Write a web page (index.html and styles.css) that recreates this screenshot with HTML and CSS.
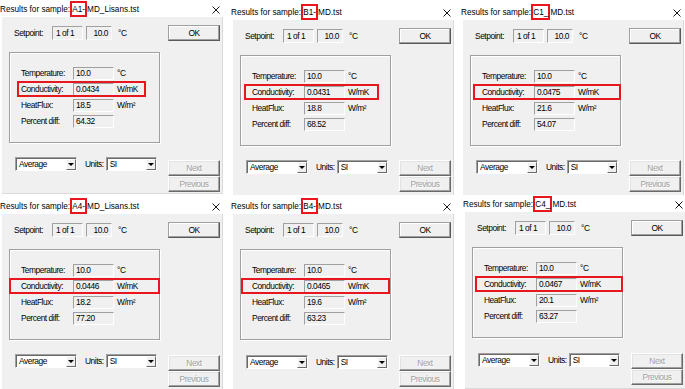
FILE: index.html
```html
<!DOCTYPE html>
<html lang="en">

<head>
    <meta charset="UTF-8">
    <meta name="viewport" content="width=device-width, initial-scale=1.0">
    <title>Results</title>
    <link rel="stylesheet" href="styles.css">
</head>

<body>
    <div class="sheet">

        <div class="dialog d1">
            <div class="titlebar">
                <span class="title">Results for sample: <span class="mark">A1-</span>MD_Lisans.tst</span>
                <svg class="close" viewBox="0 0 8 8"><path d="M0.5 0.5L7.5 7.5M7.5 0.5L0.5 7.5" /></svg>
            </div>
            <div class="window">
                <div class="setpoint-row">
                    <span class="sp-label">Setpoint:</span>
                    <span class="field field-count">1 of 1</span>
                    <span class="field field-sp">10.0</span>
                    <span class="sp-unit">°C</span>
                    <span class="btn btn-ok">OK</span>
                </div>
                <div class="group">
                    <div class="row"><span class="row-label">Temperature:</span><span class="field">10.0</span><span class="row-unit">°C</span></div>
                    <div class="row hl"><span class="row-label">Conductivity:</span><span class="field">0.0434</span><span class="row-unit">W/mK</span></div>
                    <div class="row"><span class="row-label">HeatFlux:</span><span class="field">18.5</span><span class="row-unit">W/m²</span></div>
                    <div class="row"><span class="row-label">Percent diff:</span><span class="field">64.32</span></div>
                </div>
                <div class="controls">
                    <span class="combo combo-mode"><span class="combo-text">Average</span><span class="combo-arrow"></span></span>
                    <span class="units-label">Units:</span>
                    <span class="combo combo-units"><span class="combo-text">SI</span><span class="combo-arrow"></span></span>
                    <div class="nav">
                        <span class="btn btn-off">Next</span>
                        <span class="btn btn-off">Previous</span>
                    </div>
                </div>
            </div>
        </div>

        <div class="dialog d2">
            <div class="titlebar">
                <span class="title">Results for sample: <span class="mark">B1-</span>MD.tst</span>
                <svg class="close" viewBox="0 0 8 8"><path d="M0.5 0.5L7.5 7.5M7.5 0.5L0.5 7.5" /></svg>
            </div>
            <div class="window">
                <div class="setpoint-row">
                    <span class="sp-label">Setpoint:</span>
                    <span class="field field-count">1 of 1</span>
                    <span class="field field-sp">10.0</span>
                    <span class="sp-unit">°C</span>
                    <span class="btn btn-ok">OK</span>
                </div>
                <div class="group">
                    <div class="row"><span class="row-label">Temperature:</span><span class="field">10.0</span><span class="row-unit">°C</span></div>
                    <div class="row hl"><span class="row-label">Conductivity:</span><span class="field">0.0431</span><span class="row-unit">W/mK</span></div>
                    <div class="row"><span class="row-label">HeatFlux:</span><span class="field">18.8</span><span class="row-unit">W/m²</span></div>
                    <div class="row"><span class="row-label">Percent diff:</span><span class="field">68.52</span></div>
                </div>
                <div class="controls">
                    <span class="combo combo-mode"><span class="combo-text">Average</span><span class="combo-arrow"></span></span>
                    <span class="units-label">Units:</span>
                    <span class="combo combo-units"><span class="combo-text">SI</span><span class="combo-arrow"></span></span>
                    <div class="nav">
                        <span class="btn btn-off">Next</span>
                        <span class="btn btn-off">Previous</span>
                    </div>
                </div>
            </div>
        </div>

        <div class="dialog d3">
            <div class="titlebar">
                <span class="title">Results for sample: <span class="mark">C1_</span>MD.tst</span>
                <svg class="close" viewBox="0 0 8 8"><path d="M0.5 0.5L7.5 7.5M7.5 0.5L0.5 7.5" /></svg>
            </div>
            <div class="window">
                <div class="setpoint-row">
                    <span class="sp-label">Setpoint:</span>
                    <span class="field field-count">1 of 1</span>
                    <span class="field field-sp">10.0</span>
                    <span class="sp-unit">°C</span>
                    <span class="btn btn-ok">OK</span>
                </div>
                <div class="group">
                    <div class="row"><span class="row-label">Temperature:</span><span class="field">10.0</span><span class="row-unit">°C</span></div>
                    <div class="row hl"><span class="row-label">Conductivity:</span><span class="field">0.0475</span><span class="row-unit">W/mK</span></div>
                    <div class="row"><span class="row-label">HeatFlux:</span><span class="field">21.6</span><span class="row-unit">W/m²</span></div>
                    <div class="row"><span class="row-label">Percent diff:</span><span class="field">54.07</span></div>
                </div>
                <div class="controls">
                    <span class="combo combo-mode"><span class="combo-text">Average</span><span class="combo-arrow"></span></span>
                    <span class="units-label">Units:</span>
                    <span class="combo combo-units"><span class="combo-text">SI</span><span class="combo-arrow"></span></span>
                    <div class="nav">
                        <span class="btn btn-off">Next</span>
                        <span class="btn btn-off">Previous</span>
                    </div>
                </div>
            </div>
        </div>

        <div class="dialog d4">
            <div class="titlebar">
                <span class="title">Results for sample: <span class="mark">A4-</span>MD_Lisans.tst</span>
                <svg class="close" viewBox="0 0 8 8"><path d="M0.5 0.5L7.5 7.5M7.5 0.5L0.5 7.5" /></svg>
            </div>
            <div class="window">
                <div class="setpoint-row">
                    <span class="sp-label">Setpoint:</span>
                    <span class="field field-count">1 of 1</span>
                    <span class="field field-sp">10.0</span>
                    <span class="sp-unit">°C</span>
                    <span class="btn btn-ok">OK</span>
                </div>
                <div class="group">
                    <div class="row"><span class="row-label">Temperature:</span><span class="field">10.0</span><span class="row-unit">°C</span></div>
                    <div class="row hl"><span class="row-label">Conductivity:</span><span class="field">0.0446</span><span class="row-unit">W/mK</span></div>
                    <div class="row"><span class="row-label">HeatFlux:</span><span class="field">18.2</span><span class="row-unit">W/m²</span></div>
                    <div class="row"><span class="row-label">Percent diff:</span><span class="field">77.20</span></div>
                </div>
                <div class="controls">
                    <span class="combo combo-mode"><span class="combo-text">Average</span><span class="combo-arrow"></span></span>
                    <span class="units-label">Units:</span>
                    <span class="combo combo-units"><span class="combo-text">SI</span><span class="combo-arrow"></span></span>
                    <div class="nav">
                        <span class="btn btn-off">Next</span>
                        <span class="btn btn-off">Previous</span>
                    </div>
                </div>
            </div>
        </div>

        <div class="dialog d5">
            <div class="titlebar">
                <span class="title">Results for sample: <span class="mark">B4-</span>MD.tst</span>
                <svg class="close" viewBox="0 0 8 8"><path d="M0.5 0.5L7.5 7.5M7.5 0.5L0.5 7.5" /></svg>
            </div>
            <div class="window">
                <div class="setpoint-row">
                    <span class="sp-label">Setpoint:</span>
                    <span class="field field-count">1 of 1</span>
                    <span class="field field-sp">10.0</span>
                    <span class="sp-unit">°C</span>
                    <span class="btn btn-ok">OK</span>
                </div>
                <div class="group">
                    <div class="row"><span class="row-label">Temperature:</span><span class="field">10.0</span><span class="row-unit">°C</span></div>
                    <div class="row hl"><span class="row-label">Conductivity:</span><span class="field">0.0465</span><span class="row-unit">W/mK</span></div>
                    <div class="row"><span class="row-label">HeatFlux:</span><span class="field">19.6</span><span class="row-unit">W/m²</span></div>
                    <div class="row"><span class="row-label">Percent diff:</span><span class="field">63.23</span></div>
                </div>
                <div class="controls">
                    <span class="combo combo-mode"><span class="combo-text">Average</span><span class="combo-arrow"></span></span>
                    <span class="units-label">Units:</span>
                    <span class="combo combo-units"><span class="combo-text">SI</span><span class="combo-arrow"></span></span>
                    <div class="nav">
                        <span class="btn btn-off">Next</span>
                        <span class="btn btn-off">Previous</span>
                    </div>
                </div>
            </div>
        </div>

        <div class="dialog d6">
            <div class="titlebar">
                <span class="title">Results for sample: <span class="mark">C4_</span>MD.tst</span>
                <svg class="close" viewBox="0 0 8 8"><path d="M0.5 0.5L7.5 7.5M7.5 0.5L0.5 7.5" /></svg>
            </div>
            <div class="window">
                <div class="setpoint-row">
                    <span class="sp-label">Setpoint:</span>
                    <span class="field field-count">1 of 1</span>
                    <span class="field field-sp">10.0</span>
                    <span class="sp-unit">°C</span>
                    <span class="btn btn-ok">OK</span>
                </div>
                <div class="group">
                    <div class="row"><span class="row-label">Temperature:</span><span class="field">10.0</span><span class="row-unit">°C</span></div>
                    <div class="row hl"><span class="row-label">Conductivity:</span><span class="field">0.0467</span><span class="row-unit">W/mK</span></div>
                    <div class="row"><span class="row-label">HeatFlux:</span><span class="field">20.1</span><span class="row-unit">W/m²</span></div>
                    <div class="row"><span class="row-label">Percent diff:</span><span class="field">63.27</span></div>
                </div>
                <div class="controls">
                    <span class="combo combo-mode"><span class="combo-text">Average</span><span class="combo-arrow"></span></span>
                    <span class="units-label">Units:</span>
                    <span class="combo combo-units"><span class="combo-text">SI</span><span class="combo-arrow"></span></span>
                    <div class="nav">
                        <span class="btn btn-off">Next</span>
                        <span class="btn btn-off">Previous</span>
                    </div>
                </div>
            </div>
        </div>

    </div>
</body>

</html>
```

FILE: styles.css
```css
body {
    margin: 0;
    background: #fff;
    color: #000;
    font-family: "Liberation Sans", Arial, sans-serif;
    font-size: 8.4px;
    letter-spacing: -0.45px;
}

.sheet {
    display: grid;
    grid-template-columns: 228px 230px 227px;
    grid-template-rows: 195px 194px;
    width: 685px;
    height: 389px;
    overflow: hidden;
}

/* per-screenshot offsets */
.dialog {
    --dx: 0px;
    --dy: 0px;
    --hl: 7px;
    --hr: 13px;
    --ctl: 14px;
    --nav: 3px;
    display: flex;
    flex-direction: column;
    padding-left: var(--dx);
    padding-top: var(--dy);
    overflow: hidden;
}

.d2 { --dx: 3px; --dy: 3px; --hl: 3px; --hr: 11px; --nav: 0px; }
.d3 { --dx: 3px; --dy: 3px; --hl: 2px; --hr: -1px; --nav: 0px; }
.d4 { --dx: 0px; --dy: 2px; --hl: -1px; --hr: -1px; --nav: 1px; }
.d5 { --dx: 3px; --dy: 2px; --hl: 0px; --hr: 0px; --nav: 0px; --ctl: 15px; }
.d6 { --dx: 5px; --dy: 0px; --hl: 2px; --hr: -1px; --nav: 0px; --ctl: 15px; }

.titlebar {
    display: flex;
    align-items: center;
    flex-shrink: 0;
    width: 223px;
    height: 17px;
    padding: 2px 3px 0 0;
    box-sizing: border-box;
    font-size: 8.2px;
    letter-spacing: 0;
}

.title {
    flex: 1;
    white-space: nowrap;
}

.mark {
    border: 2px solid #e8161f;
    padding: 2px 0 1px;
    margin-left: -2px;
}

.close {
    width: 8px;
    height: 8px;
    stroke: #000;
    stroke-width: 0.9;
    fill: none;
}

.window {
    display: flex;
    flex-direction: column;
    flex-shrink: 0;
    width: 221px;
    height: 177px;
    margin-left: 2px;
    background: #f0f0f0;
    border-right: 1px solid #dadada;
    border-bottom: 1px solid #dadada;
    box-sizing: border-box;
}

.field {
    display: flex;
    align-items: center;
    height: 14px;
    padding: 0 3px;
    box-sizing: border-box;
    border: 1px solid;
    border-color: #a0a0a0 #fff #fff #a0a0a0;
    white-space: nowrap;
}

.setpoint-row {
    display: flex;
    align-items: center;
    height: 16px;
    margin: 8px 2px 0 12px;
}

.sp-label {
    width: 38px;
}

.field-count {
    width: 31px;
}

.field-sp {
    width: 26px;
    margin-left: 3px;
    justify-content: flex-end;
}

.sp-unit {
    margin-left: 6px;
}

.btn {
    display: flex;
    align-items: center;
    justify-content: center;
    width: 52px;
    height: 16px;
    box-sizing: border-box;
    border: 1px solid;
    border-color: #fff #696969 #696969 #fff;
    box-shadow: inset -1px -1px #a0a0a0, inset 1px 1px #e3e3e3;
}

.btn-ok {
    margin-left: auto;
    border-color: #a0a0a0 #595959 #595959 #a0a0a0;
    box-shadow: inset -1px -1px #a0a0a0, inset 1px 1px #fff;
}

.btn-off {
    color: #a0a0a0;
    text-shadow: 1px 1px #fff;
}

.group {
    width: 151px;
    height: 91px;
    margin: 11px 0 0 7px;
    padding-top: 12px;
    box-sizing: border-box;
    border: 1px solid #a0a0a0;
    box-shadow: inset 1px 1px #fff, 1px 1px #fff;
}

.row {
    position: relative;
    display: flex;
    align-items: center;
    height: 16px;
}

.row-label {
    width: 52px;
    padding-left: 11px;
}

.row .field {
    width: 41px;
    height: 13px;
    padding: 0 2px;
}

.row-unit {
    margin-left: 3px;
}

/* annotation frame drawn over the conductivity row */
.row.hl::after {
    content: "";
    position: absolute;
    top: 0;
    bottom: 0;
    left: var(--hl);
    right: var(--hr);
    border: 2px solid #e8161f;
}

.controls {
    display: flex;
    align-items: flex-start;
    margin: var(--ctl) 2px 0 13px;
}

.combo {
    display: flex;
    height: 14px;
    box-sizing: border-box;
    background: #fff;
    border: 1px solid;
    border-color: #a0a0a0 #fff #fff #a0a0a0;
    box-shadow: inset 1px 1px #696969;
}

.combo-mode {
    width: 62px;
}

.combo-units {
    width: 51px;
    margin-left: 2px;
}

.combo-text {
    flex: 1;
    padding: 1px 0 0 3px;
    line-height: 11px;
}

.combo-arrow {
    display: flex;
    align-items: center;
    justify-content: center;
    width: 10px;
    margin: 1px 0 0;
    box-sizing: border-box;
    background: #f0f0f0;
    border: 1px solid;
    border-color: #fff #696969 #696969 #fff;
}

.combo-arrow::before {
    content: "";
    border-left: 3px solid transparent;
    border-right: 3px solid transparent;
    border-top: 3px solid #000;
}

.units-label {
    margin-left: 8px;
    line-height: 14px;
}

.nav {
    display: flex;
    flex-direction: column;
    margin: var(--nav) 0 0 auto;
}
```
